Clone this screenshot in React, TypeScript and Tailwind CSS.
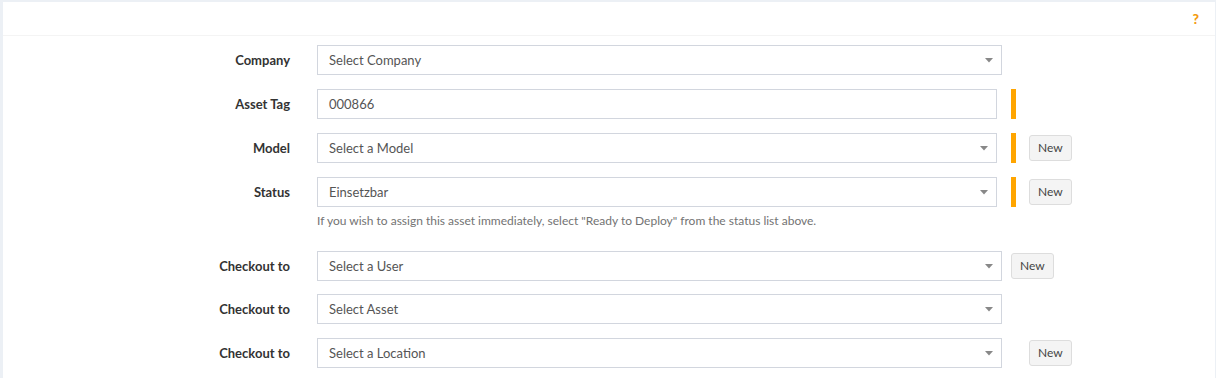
import React from "react";

const Caret = () => (
  <svg width="8" height="5" viewBox="0 0 8 5" className="shrink-0">
    <path d="M0 0 L8 0 L4 4.5 Z" fill="#888" />
  </svg>
);

const Required = () => <div className="w-[5px] h-[30px] bg-[#ffa500] shrink-0" />;

const NewButton = ({ ml }: { ml: string }) => (
  <button
    className={`${ml} h-[26px] px-[8px] bg-[#f4f4f4] border border-[#ddd] rounded-[3px] text-[12px] text-[#444] leading-none`}
  >
    New
  </button>
);

const Row = ({
  label,
  value,
  width,
  select = true,
  children,
  mb = "mb-[14px]",
}: {
  label: string;
  value: string;
  width: string;
  select?: boolean;
  children?: React.ReactNode;
  mb?: string;
}) => (
  <div className={`flex items-center ${mb}`}>
    <label className="w-[287px] mt-[2px] text-right text-[13px] font-bold text-[#333] shrink-0">{label}</label>
    <div
      className={`${width} ml-[27px] h-[30px] border border-[#d2d6de] flex items-center justify-between pl-[11px] pr-[8px] text-[13px] text-[#555] shrink-0`}
    >
      <span className="mt-[2px]">{value}</span>
      {select && <Caret />}
    </div>
    {children}
  </div>
);

export default function App() {
  return (
    <div
      className="min-h-screen bg-[#ecf0f5] pt-[2px] pl-[3px] pr-px"
      style={{ fontFamily: "Lato, 'Noto Sans', sans-serif" }}
    >
      <div className="bg-white h-[376px]">
        <div className="h-[34px] border-b border-[#f4f4f4] flex items-center justify-end pr-[16px]">
          <span className="text-[#f39c12] font-black text-[14px]">?</span>
        </div>
        <div className="pt-[9px]">
          <Row label="Company" value="Select Company" width="w-[685px]" />
          <Row label="Asset Tag" value="000866" width="w-[680px]" select={false}>
            <div className="ml-[14px]">
              <Required />
            </div>
          </Row>
          <Row label="Model" value="Select a Model" width="w-[680px]">
            <div className="ml-[14px]">
              <Required />
            </div>
            <NewButton ml="ml-[13px]" />
          </Row>
          <Row label="Status" value="Einsetzbar" width="w-[680px]" mb="mb-0">
            <div className="ml-[14px]">
              <Required />
            </div>
            <NewButton ml="ml-[13px]" />
          </Row>
          <p className="ml-[314px] mt-[6px] mb-[22px] text-[12px] leading-[16px] text-[#737373]">
            If you wish to assign this asset immediately, select "Ready to Deploy" from the status list above.
          </p>
          <Row label="Checkout to" value="Select a User" width="w-[685px]" mb="mb-[13px]">
            <NewButton ml="ml-[9px]" />
          </Row>
          <Row label="Checkout to" value="Select Asset" width="w-[685px]" />
          <Row label="Checkout to" value="Select a Location" width="w-[685px]">
            <NewButton ml="ml-[27px]" />
          </Row>
        </div>
      </div>
    </div>
  );
}
